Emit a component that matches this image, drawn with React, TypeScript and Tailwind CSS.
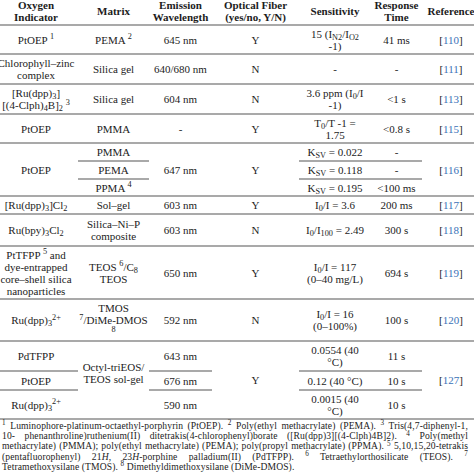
import React from "react";

// column widths: indicator, matrix, emission, fiber, sensitivity, response, reference
const COLS = "grid-cols-[84px_71px_63px_87px_72px_51px_58px]";
const ROWS =
  "grid-rows-[29px_29px_30px_30px_29px_18px_18px_17px_18px_32px_53px_42px_30px_19px_29px]";

type CellProps = { children?: React.ReactNode; span?: boolean; head?: boolean; className?: string };

function Cell({ children, span, head, className = "" }: CellProps) {
  return (
    <div
      className={`flex items-center justify-center text-center whitespace-nowrap border-b-2 border-[#a9a9a9] px-0.5 ${
        span ? "row-span-3" : ""
      } ${head ? "font-bold" : ""} ${className}`}
    >
      <div>{children}</div>
    </div>
  );
}

const Ref = ({ n }: { n: string }) => (
  <span>
    [<span className="text-[#3a72b8]">{n}</span>]
  </span>
);

const Ksv = ({ v }: { v: string }) => (
  <>
    K<sub>SV</sub> = {v}
  </>
);

export default function App() {
  return (
    <div className="w-[474px] h-[474px] overflow-hidden bg-white text-[#1c1c1c] font-['Liberation_Serif',serif]">
      <div className={`grid ${COLS} ${ROWS} -mt-[3px] -ml-[6px] w-[486px] text-[11px] leading-[12px]`}>
        {/* header */}
        <Cell head>
          Oxygen
          <br />
          Indicator
        </Cell>
        <Cell head>Matrix</Cell>
        <Cell head>
          Emission
          <br />
          Wavelength
        </Cell>
        <Cell head>
          Optical Fiber
          <br />
          (yes/no, Y/N)
        </Cell>
        <Cell head>Sensitivity</Cell>
        <Cell head>
          Response
          <br />
          Time
        </Cell>
        <Cell head>Reference</Cell>

        {/* 110 */}
        <Cell>
          PtOEP <sup>1</sup>
        </Cell>
        <Cell>
          PEMA <sup>2</sup>
        </Cell>
        <Cell>645 nm</Cell>
        <Cell>Y</Cell>
        <Cell>
          15 (I<sub>N2</sub>/I<sub>O2</sub>
          <br />
          -1)
        </Cell>
        <Cell>41 ms</Cell>
        <Cell>
          <Ref n="110" />
        </Cell>

        {/* 111 */}
        <Cell>
          Chlorophyll–zinc
          <br />
          complex
        </Cell>
        <Cell>Silica gel</Cell>
        <Cell>640/680 nm</Cell>
        <Cell>N</Cell>
        <Cell>-</Cell>
        <Cell>-</Cell>
        <Cell>
          <Ref n="111" />
        </Cell>

        {/* 113 */}
        <Cell>
          [Ru(dpp)<sub>3</sub>]
          <br />
          [(4-Clph)<sub>4</sub>B]<sub>2</sub> <sup>3</sup>
        </Cell>
        <Cell>Silica gel</Cell>
        <Cell>604 nm</Cell>
        <Cell>N</Cell>
        <Cell>
          3.6 ppm (I<sub>0</sub>/I
          <br />
          -1)
        </Cell>
        <Cell>&lt;1 s</Cell>
        <Cell>
          <Ref n="113" />
        </Cell>

        {/* 115 */}
        <Cell>PtOEP</Cell>
        <Cell>PMMA</Cell>
        <Cell>-</Cell>
        <Cell>Y</Cell>
        <Cell>
          T<sub>0</sub>/T -1 =
          <br />
          1.75
        </Cell>
        <Cell>&lt;0.8 s</Cell>
        <Cell>
          <Ref n="115" />
        </Cell>

        {/* 116 group */}
        <Cell span>PtOEP</Cell>
        <Cell>PMMA</Cell>
        <Cell span>647 nm</Cell>
        <Cell span>Y</Cell>
        <Cell>
          <Ksv v="0.022" />
        </Cell>
        <Cell>-</Cell>
        <Cell span>
          <Ref n="116" />
        </Cell>
        <Cell>PEMA</Cell>
        <Cell>
          <Ksv v="0.118" />
        </Cell>
        <Cell>-</Cell>
        <Cell>
          PPMA <sup>4</sup>
        </Cell>
        <Cell>
          <Ksv v="0.195" />
        </Cell>
        <Cell>&lt;100 ms</Cell>

        {/* 117 */}
        <Cell>
          [Ru(dpp)<sub>3</sub>]Cl<sub>2</sub>
        </Cell>
        <Cell>Sol–gel</Cell>
        <Cell>603 nm</Cell>
        <Cell>Y</Cell>
        <Cell>
          I<sub>0</sub>/I = 3.6
        </Cell>
        <Cell>200 ms</Cell>
        <Cell>
          <Ref n="117" />
        </Cell>

        {/* 118 */}
        <Cell>
          Ru(bpy)<sub>3</sub>Cl<sub>2</sub>
        </Cell>
        <Cell>
          Silica–Ni–P
          <br />
          composite
        </Cell>
        <Cell>603 nm</Cell>
        <Cell>N</Cell>
        <Cell>
          I<sub>0</sub>/I<sub>100</sub> = 2.49
        </Cell>
        <Cell>300 s</Cell>
        <Cell>
          <Ref n="118" />
        </Cell>

        {/* 119 */}
        <Cell>
          PtTFPP <sup>5</sup> and
          <br />
          dye-entrapped
          <br />
          core–shell silica
          <br />
          nanoparticles
        </Cell>
        <Cell>
          TEOS <sup>6</sup>/C<sub>8</sub>
          <br />
          TEOS
        </Cell>
        <Cell>650 nm</Cell>
        <Cell>Y</Cell>
        <Cell>
          I<sub>0</sub>/I = 117
          <br />
          (0–40 mg/L)
        </Cell>
        <Cell>694 s</Cell>
        <Cell>
          <Ref n="119" />
        </Cell>

        {/* 120 */}
        <Cell>
          Ru(dpp)<sub>3</sub>
          <sup>2+</sup>
        </Cell>
        <Cell>
          TMOS
          <br />
          <sup>7</sup>/DiMe-DMOS
          <br />
          <sup>8</sup>
        </Cell>
        <Cell>592 nm</Cell>
        <Cell>N</Cell>
        <Cell>
          I<sub>0</sub>/I = 16
          <br />
          (0–100%)
        </Cell>
        <Cell>100 s</Cell>
        <Cell>
          <Ref n="120" />
        </Cell>

        {/* 127 group */}
        <Cell>PdTFPP</Cell>
        <Cell span className="pb-[14px]">
          Octyl-triEOS/
          <br />
          TEOS sol-gel
        </Cell>
        <Cell>643 nm</Cell>
        <Cell span>Y</Cell>
        <Cell>
          0.0554 (40
          <br />
          °C)
        </Cell>
        <Cell>11 s</Cell>
        <Cell span>
          <Ref n="127" />
        </Cell>
        <Cell>PtOEP</Cell>
        <Cell>676 nm</Cell>
        <Cell>0.12 (40 °C)</Cell>
        <Cell>10 s</Cell>
        <Cell>
          Ru(dpp)<sub>3</sub>
          <sup>2+</sup>
        </Cell>
        <Cell>590 nm</Cell>
        <Cell>
          0.0015 (40
          <br />
          °C)
        </Cell>
        <Cell>10 s</Cell>
      </div>

      {/* footnotes */}
      <div className="pl-[2px] pr-[6px] pt-[1px] text-[9.6px] leading-[10.2px] tracking-[0.1px] text-justify [text-align-last:justify]">
        <p>
          <sup>1</sup> Luminophore-platinum-octaethyl-porphyrin (PtOEP). <sup>2</sup> Poly(ethyl methacrylate) (PEMA).{" "}
          <sup>3</sup> Tris(4,7-diphenyl-1,
        </p>
        <p>
          10- phenanthroline)ruthenium(II) ditetrakis(4-chlorophenyl)borate ([Ru(dpp)3][(4-Clph)4B]2). <sup>4</sup>{" "}
          Poly(methyl
        </p>
        <p>
          methacrylate) (PMMA); poly(ethyl methacrylate) (PEMA); poly(propyl methacrylate) (PPMA). <sup>5</sup>{" "}
          5,10,15,20-tetrakis
        </p>
        <p>
          (pentafluorophenyl) 21<i>H</i>, 23<i>H</i>-porphine palladium(II) (PdTFPP). <sup>6</sup> Tetraethylorthosilicate
          (TEOS). <sup>7</sup>
        </p>
        <p className="[text-align-last:left]">
          Tetramethoxysilane (TMOS). <sup>8</sup> Dimethyldimethoxysilane (DiMe-DMOS).
        </p>
      </div>
    </div>
  );
}
